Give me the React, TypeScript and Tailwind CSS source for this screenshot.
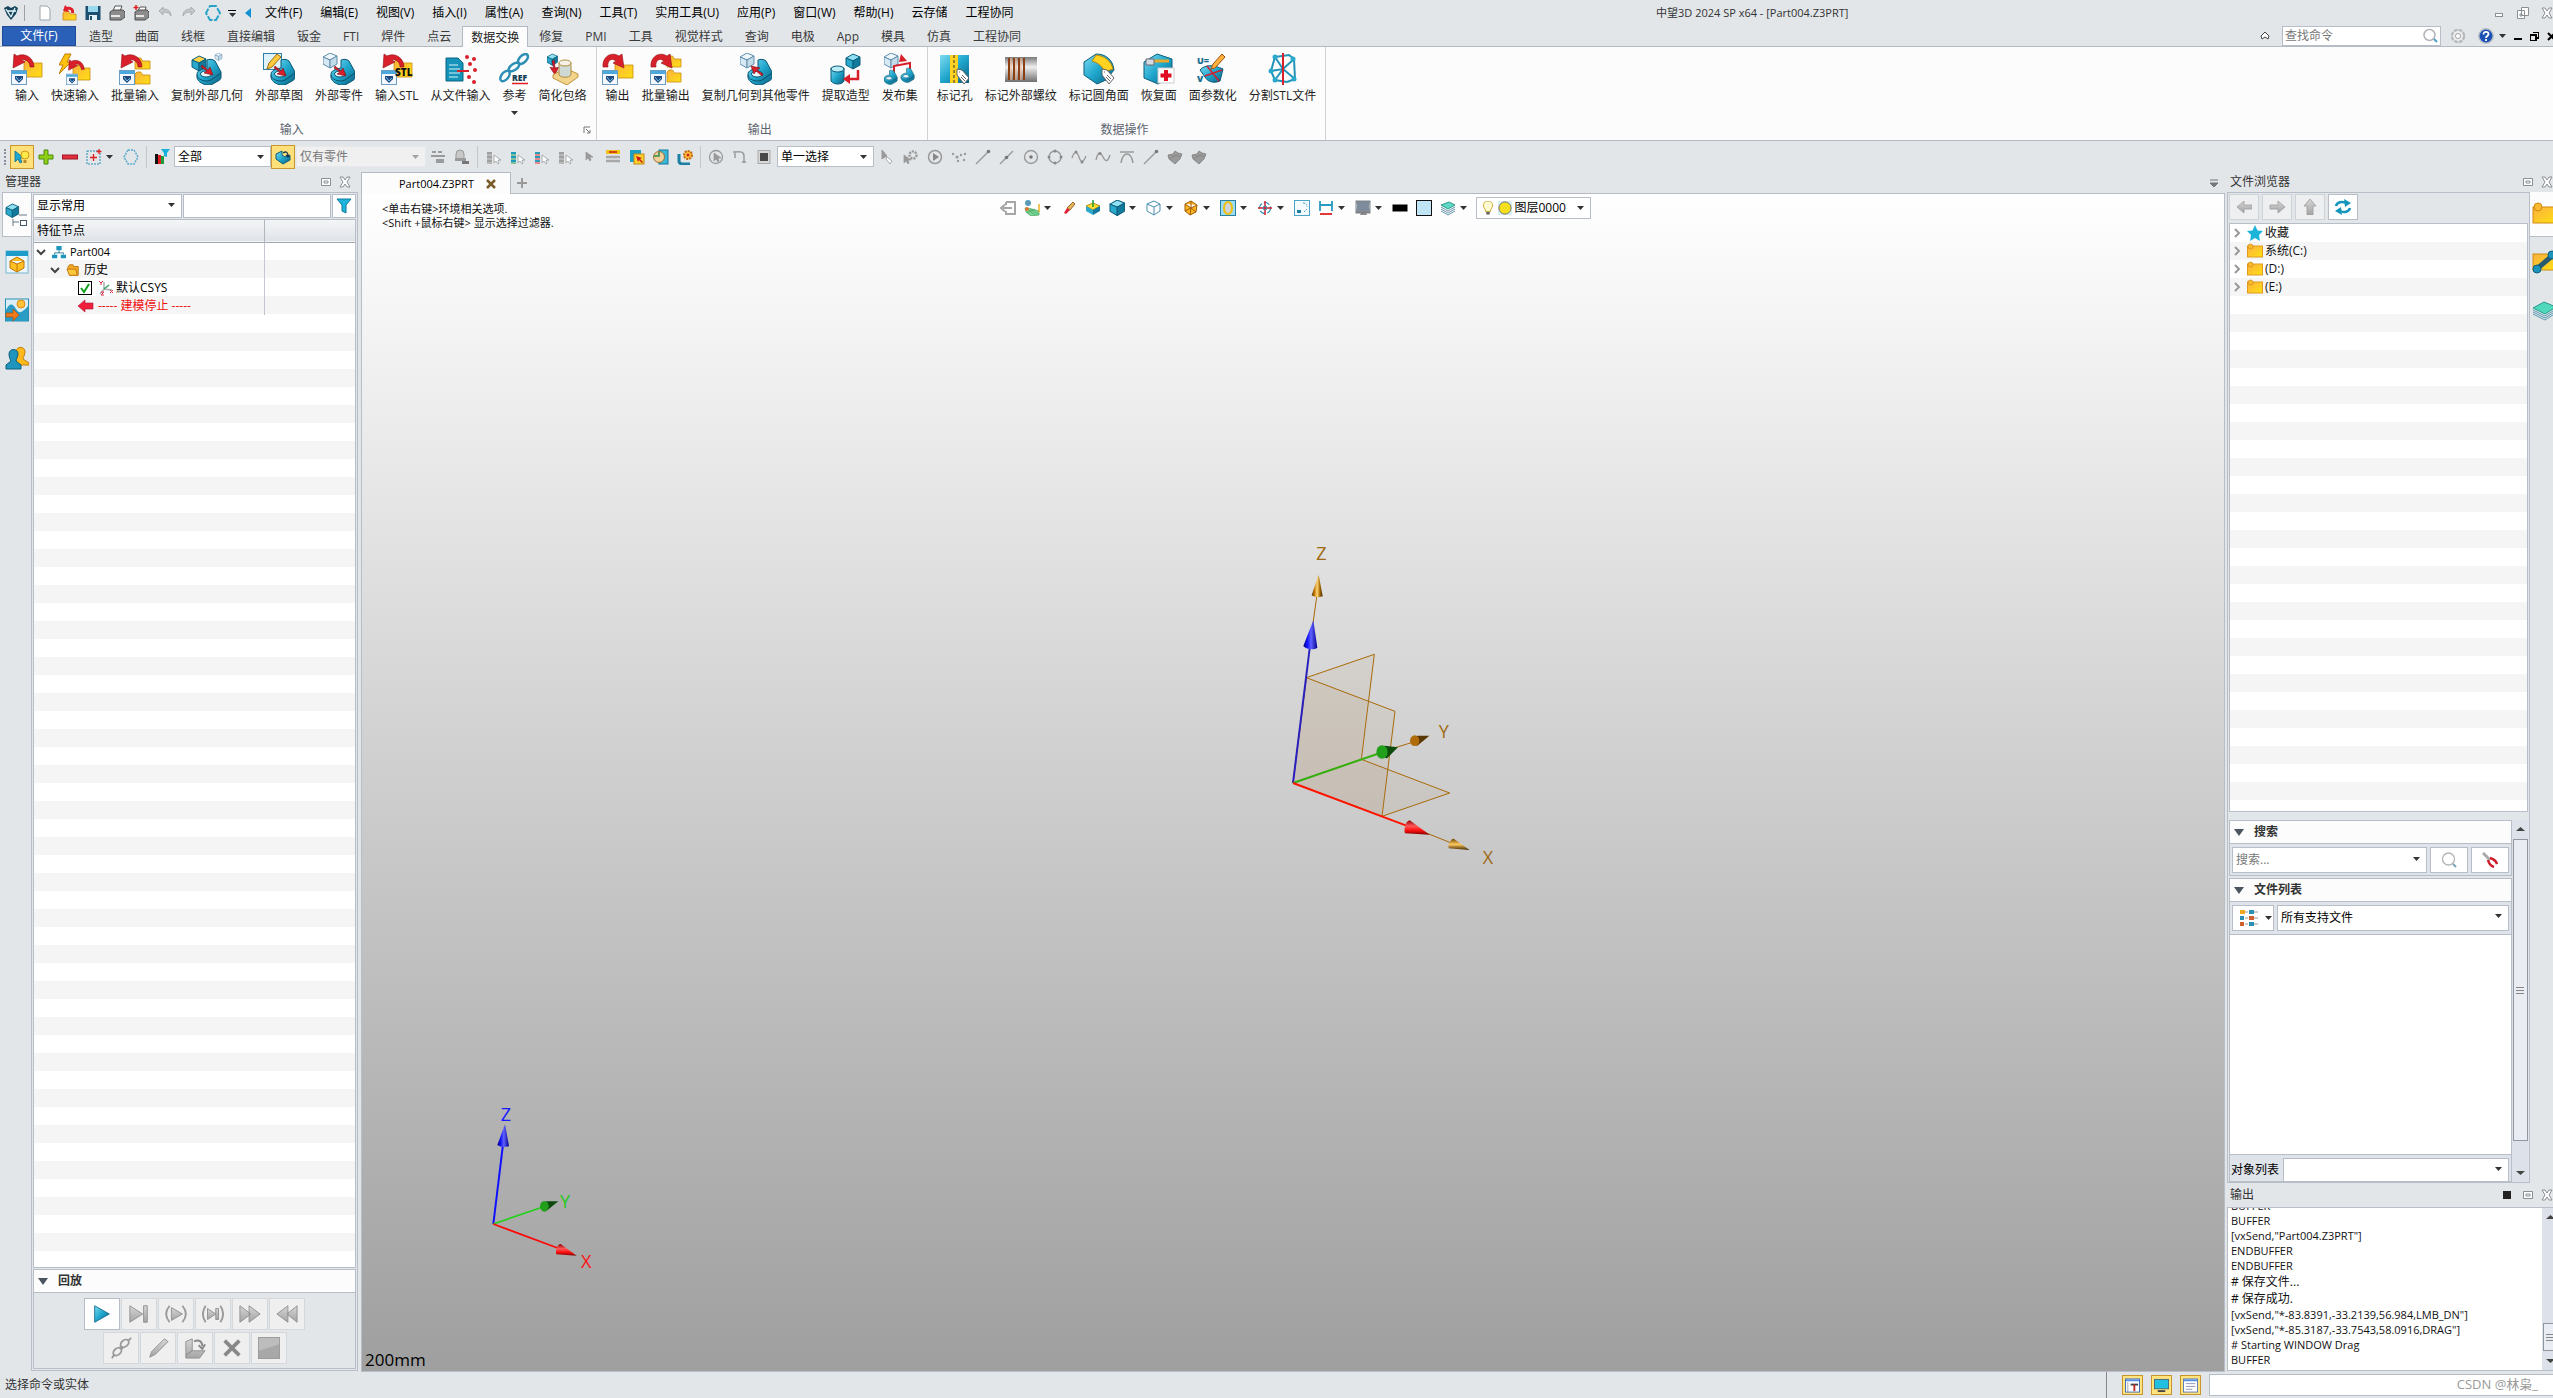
import React from "react";

type Kids = { children?: React.ReactNode };

/* ---------- shared drawing pieces ---------- */

function Svg({ s = 16, v, className = "", children }: Kids & { s?: number; v?: number; className?: string }) {
  return (
    <svg width={s} height={s} viewBox={`0 0 ${v ?? s} ${v ?? s}`} className={`shrink-0 ${className}`} aria-hidden="true" fill="none">
      {children}
    </svg>
  );
}

function Gradients() {
  return (
    <svg className="absolute h-0 w-0" aria-hidden="true">
      <defs>
        <linearGradient id="teal" x1="0" y1="0" x2="1" y2="1">
          <stop offset="0" stopColor="#7fdcf2" />
          <stop offset="0.5" stopColor="#1fa6cc" />
          <stop offset="1" stopColor="#0d5f80" />
        </linearGradient>
        <linearGradient id="gold" x1="0" y1="0" x2="1" y2="1">
          <stop offset="0" stopColor="#fbb040" />
          <stop offset="1" stopColor="#ffe012" />
        </linearGradient>
        <linearGradient id="steel" x1="0" y1="0" x2="0" y2="1">
          <stop offset="0" stopColor="#7a7a7a" />
          <stop offset="0.4" stopColor="#efefef" />
          <stop offset="1" stopColor="#6f6f6f" />
        </linearGradient>
        <linearGradient id="gray" x1="0" y1="0" x2="0" y2="1">
          <stop offset="0" stopColor="#d6d6d6" />
          <stop offset="1" stopColor="#a4a4a4" />
        </linearGradient>
        <linearGradient id="coneGold" x1="0" y1="0" x2="1" y2="0">
          <stop offset="0" stopColor="#4d2d00" />
          <stop offset="0.25" stopColor="#c07a00" />
          <stop offset="0.5" stopColor="#ffd67a" />
          <stop offset="0.75" stopColor="#a86a00" />
          <stop offset="1" stopColor="#3d2400" />
        </linearGradient>
        <linearGradient id="coneGoldV" x1="0" y1="0" x2="0" y2="1">
          <stop offset="0" stopColor="#6b4200" />
          <stop offset="0.5" stopColor="#ffc95e" />
          <stop offset="1" stopColor="#3d2400" />
        </linearGradient>
        <linearGradient id="coneBlue" x1="0" y1="0" x2="1" y2="0">
          <stop offset="0" stopColor="#000080" />
          <stop offset="0.3" stopColor="#1414ff" />
          <stop offset="0.55" stopColor="#6060ff" />
          <stop offset="1" stopColor="#000090" />
        </linearGradient>
        <linearGradient id="coneRed" x1="0" y1="0" x2="0" y2="1">
          <stop offset="0" stopColor="#900000" />
          <stop offset="0.4" stopColor="#ff5a5a" />
          <stop offset="0.7" stopColor="#ff1010" />
          <stop offset="1" stopColor="#800000" />
        </linearGradient>
      </defs>
    </svg>
  );
}

const Folder = ({ x = 0, y = 0, w = 18, h = 16 }) => (
  <path
    d={`M${x} ${y + 2}l2-2h${w * 0.25}l2 3h${w * 0.75 - 4}v${h - 3}H${x}Z`}
    fill="url(#gold)"
    stroke="#c98a10"
    strokeWidth="0.8"
  />
);
const DocWin = () => (
  <>
    <rect x="0.5" y="17.5" width="15" height="14" fill="#f2f8fd" stroke="#6b9cc4" />
    <rect x="1" y="18" width="14" height="3" fill="#4aa8dc" />
    <path d="M4 23h8v3l-4 4-4-4Z" fill="#24477e" />
    <path d="M5 24l3 4 3-3" stroke="#6bc8e8" />
  </>
);
const ArrowIn = () => <path d="M23 14C23 5 14-1 6 3L3 1 2 15l12-6-3-2c4-1 8 2 8 7Z" fill="#d81f2a" stroke="#8e1018" strokeWidth="0.6" />;
const ArrowOut = () => <path d="M1 14C0 4 9-2 17 3l3-2 2 14-11-5 3-2C9 4 5 8 6 14Z" fill="#d81f2a" stroke="#8e1018" strokeWidth="0.6" />;
const Cube = ({ x = 0, y = 0, k = 1, ghost = false, top = "" }) => (
  <g transform={`translate(${x} ${y}) scale(${k})`} stroke={ghost ? "#5f8dab" : "#0c5f7c"} strokeLinejoin="round">
    <path d="M0 4l7-4 7 3-7 4Z" fill={ghost ? "#eef6fb" : top || "#8fe0f3"} />
    <path d="M0 4l7 3v8l-7-4Z" fill={ghost ? "#d9e9f3" : "#2aa9cc"} />
    <path d="M14 3l-7 4v8l7-4Z" fill={ghost ? "#c4dbe9" : "#127a9c"} />
  </g>
);
const Bracket = ({ x = 8, y = 6, k = 1 }) => (
  <g transform={`translate(${x} ${y}) scale(${k})`}>
    <path d="M10 1c2-1 6-1 8 1l6 11v5c0 2-1 3-3 4l-7 4C8 27 0 23 0 18v-3c0-3 4-5 10-6Z" fill="url(#teal)" stroke="#0b5874" />
    <path d="M0 16c0 4 8 8 14 5l10-7" stroke="#083f55" strokeWidth="0.8" />
    <ellipse cx="9" cy="15" rx="5.500" ry="3" fill="#eaf8fc" stroke="#0b5874" />
  </g>
);
const RedDiag = ({ x = 0, y = 0, r = 0 }) => (
  <path transform={`translate(${x} ${y}) rotate(${r})`} d="M-6-5l6 5 2-3 3 8-9-2 3-2-6-4Z" fill="#d81f2a" stroke="#7e1018" strokeWidth="0.6" />
);
const Tag = ({ x = 0, y = 0 }) => (
  <path transform={`translate(${x} ${y})`} d="M0 0l5 1 7 8-5 6-7-9Zm2 3h1M5 6l4 4M4 8l4 4" fill="#fff" stroke="#555" strokeWidth="0.9" />
);

const big: Record<string, React.ReactNode> = {
  in: <><Folder x={13} y={7} w={18} h={17} /><ArrowIn /><DocWin /></>,
  quick: <><Folder x={14} y={12} w={17} h={15} /><path d="M6 1L0 12h4l-4 9L12 9H8l4-8Z" fill="#ffc20e" stroke="#c07c08" /><g transform="translate(8 6) scale(.75)"><ArrowIn /></g><g transform="translate(7 8) scale(.75)"><DocWin /></g></>,
  batchIn: <><Folder x={16} y={5} w={15} h={11} /><Folder x={16} y={19} w={15} h={12} /><ArrowIn /><DocWin /></>,
  copyGeo: <><Bracket x={6} y={6} /><Cube x={1} y={3} top="#ffd34a" /><Cube x={24} y={0} k={0.5} ghost /><RedDiag x={17} y={17} /></>,
  sketch: <><rect x="0.500" y="0.500" width="18" height="16" fill="#dff1f9" stroke="#2a7fa5" /><Bracket x={8} y={6} /><path d="M4 16l2-6L14 1l4 3-9 10Z" fill="#ffc93c" stroke="#9a6b13" /><RedDiag x={18} y={18} /></>,
  extPart: <><Bracket x={8} y={6} /><Cube x={0} y={0} ghost /><RedDiag x={18} y={18} /></>,
  stl: <><Folder x={13} y={7} w={18} h={17} /><ArrowIn /><DocWin /><text x="14" y="23" fontSize="10" fontWeight="900" fill="#111" fontFamily="Open Sans">STL</text></>,
  fromFile: <><path d="M1 5h12l5 5v18H1Z" fill="#1593b8" stroke="#0a6484" /><path d="M4 12h9M4 16h11M4 20h11M4 24h9" stroke="#d8f4fc" strokeWidth="1.200" /><path d="M12 18h12" stroke="#d81f2a" strokeWidth="2" /><g fill="#d81f2a"><circle cx="22" cy="4" r="2" /><circle cx="29" cy="6" r="2" /><circle cx="25" cy="11" r="2" /><circle cx="30" cy="17" r="2" /><circle cx="24" cy="24" r="2" /><circle cx="29" cy="29" r="2" /></g></>,
  ref: <><g stroke="#2d8fb5" strokeWidth="2.500"><ellipse cx="24" cy="6" rx="6" ry="3.500" transform="rotate(-45 24 6)" /><ellipse cx="15" cy="14" rx="6" ry="3" transform="rotate(-35 15 14)" /><ellipse cx="6" cy="23" rx="6" ry="3.500" transform="rotate(-50 6 23)" /></g><text x="13" y="28" fontSize="8.500" fontWeight="800" fill="#123a52" fontFamily="Open Sans">REF</text><path d="M13 30.500h16" stroke="#e02020" strokeWidth="1.500" /></>,
  simplify: <><Cube x={0} y={1} k={0.75} /><RedDiag x={8} y={15} r={45} /><path d="M6 22l12-7 13 6v3l-11 8-14-7Z" fill="#f3d48c" stroke="#c19338" /><path d="M12 10v12c2 3 10 3 12 0V10Z" fill="#cfd9d4" stroke="#b08c3e" /><ellipse cx="18" cy="10" rx="6" ry="3" fill="#f5f3e6" stroke="#b08c3e" /></>,
  out: <><Folder x={13} y={9} w={18} h={16} /><ArrowOut /><DocWin /></>,
  batchOut: <><Folder x={17} y={3} w={14} h={11} /><Folder x={17} y={17} w={14} h={12} /><ArrowOut /><DocWin /></>,
  copyTo: <><Bracket x={8} y={6} /><Cube x={0} y={0} ghost /><RedDiag x={16} y={18} r={180} /></>,
  extract: <><Cube x={16} y={1} /><path d="M1 15v13c3 4 11 4 13 0V15Z" fill="url(#teal)" stroke="#0b5874" /><ellipse cx="7.500" cy="16" rx="6.500" ry="3" fill="#b8ecf8" stroke="#0b5874" /><path d="M28 17v9H18" stroke="#d81f2a" strokeWidth="2.500" /><path d="M20 21l-7 5 7 5Z" fill="#d81f2a" /></>,
  publish: <><Cube x={0} y={0} ghost /><path d="M10 22V13l16-3v10" stroke="#d81f2a" strokeWidth="2" /><path d="M15 9l2-8 6 7Z" fill="#d81f2a" /><Bracket x={0} y={17} k={0.55} /><Bracket x={17} y={15} k={0.55} /></>,
  hole: <><rect x="1" y="2" width="29" height="28" fill="url(#teal)" /><rect x="11" y="2" width="8" height="28" fill="#ffd21f" /><path d="M15 2v28" stroke="#333" strokeDasharray="3 2" /><Tag x={18} y={16} /></>,
  thread: <><rect x="0" y="4" width="32" height="25" fill="url(#steel)" /><path d="M4 5v22M9 5v22M14 5v22M19 5v22" stroke="#8c3f14" strokeWidth="2" /><path d="M6 5v22M11 5v22M16 5v22" stroke="#f2b48c" /></>,
  fillet: <><path d="M1 9L13 1c10 0 17 6 18 16l-8 10-9 4L1 22Z" fill="url(#teal)" stroke="#0c5f7c" /><path d="M13 2c9 1 15 6 17 14l-9 3C20 14 16 10 9 8Z" fill="#ffd21f" stroke="#b88a10" /><Tag x={19} y={16} /></>,
  restore: <><path d="M1 9L14 1l15 5v18l-14 7L1 25Z" fill="url(#teal)" stroke="#0c5f7c" /><path d="M6 8h20" stroke="#e9a92c" strokeWidth="3" /><path d="M3 6h8v6H3Z" fill="#d5dde2" stroke="#667" /><rect x="15" y="15" width="16" height="15" fill="#fff" stroke="#ccc" /><path d="M23 17v11M17.500 22.500h11" stroke="#e01020" strokeWidth="4" /></>,
  param: <><text x="0" y="11" fontSize="9" fontWeight="800" fill="#176d8d" fontFamily="Open Sans">U=</text><text x="0" y="29" fontSize="9" fontWeight="800" fill="#176d8d" fontFamily="Open Sans">V</text><path d="M3 17c5-6 14-5 23-1l-3 12c-7 3-13 0-15-4Z" fill="url(#teal)" stroke="#0b5874" /><path d="M10 13l12 15M25 17L8 23" stroke="#cf2030" strokeWidth="1.500" /><path d="M14 16l2-5L25 1l3 3-10 11Z" fill="#ffb23c" stroke="#9a5013" /></>,
  splitStl: <><path d="M8 4l14-2 5 4 1 20-8 3-12-2-4-9Zm0 0l8 12 11-10M4 18l12-2 12 10M16 16l-8 11" stroke="#2294b8" strokeWidth="2" /><g fill="#2aa9cc"><circle cx="8" cy="4" r="2.500" /><circle cx="26" cy="6" r="2.500" /><circle cx="4" cy="18" r="2.500" /><circle cx="27" cy="26" r="2.500" /><circle cx="8" cy="27" r="2.500" /></g><path d="M16 0v32" stroke="#d81f2a" strokeWidth="2" /></>,
};

const G = "#9a9a9a";
const Pointer = ({ x = 0, y = 0, c = "#fff" }) => (
  <path transform={`translate(${x} ${y})`} d="M0 0v8l2-2 2 3 1-1-1-3h3Z" fill={c} stroke="#9a9a9a" strokeWidth="0.8" />
);
const listGlyph = (a: string, b: string) => (
  <><path d="M2 4h5M2 8h5M2 12h5" stroke={a} strokeWidth="2" /><path d="M2 6h5M2 10h5M2 14h5" stroke={b} /><Pointer x={9} y={6} /></>
);

const small: Record<string, React.ReactNode> = {
  newDoc: <path d="M3 1h7l3 3v11H3Z" fill="#fff" stroke="#9aa5ae" />,
  open: <><Folder x={2} y={6} w={13} h={9} /><path d="M13 8C14 3 9 1 6 2L4 0 2 6l6 1-1-2c2-1 4 1 3 3Z" fill="#e0202a" /></>,
  save: <><rect x="0.500" y="1" width="15" height="14" fill="#1d4f70" /><rect x="3" y="1" width="10" height="6" fill="#9bd8ee" /><rect x="4" y="10" width="8" height="5" fill="#e6f2f7" /><path d="M6 11v4" stroke="#1d4f70" strokeWidth="2" /></>,
  print: <><path d="M4 6l2-5h7l-2 5Z" fill="#fff" stroke="#555" /><path d="M1 7l3-2h10l2 2v5l-4 3H1Z" fill="#8c8c8c" stroke="#4e4e4e" /><path d="M2 11h9" stroke="#e8e8e8" strokeWidth="2" /></>,
  print2: <><path d="M5 6l2-4h6l-1 4Z" fill="#fff" stroke="#555" /><path d="M2 7l3-2h9l2 2v5l-4 3H2Z" fill="#8c8c8c" stroke="#4e4e4e" /><path d="M3 11h8" stroke="#e8e8e8" strokeWidth="2" /><path d="M3 0v5M.5 2.500h5" stroke="#e02020" strokeWidth="1.500" /></>,
  undo: <path d="M2 6l4-4v2c5 0 8 2 8 7-1-3-4-4-8-4v3Z" fill="#c4c8cb" stroke="#9fa5a9" strokeWidth="0.800" />,
  redo: <path d="M14 6l-4-4v2c-5 0-8 2-8 7 1-3 4-4 8-4v3Z" fill="#c4c8cb" stroke="#9fa5a9" strokeWidth="0.800" />,
  regen: <path d="M5 1h6l4 7-4 7H5L1 8Z" stroke="#2aa3cb" strokeWidth="2" strokeDasharray="7 1.500" />,
  pickLight: <><path d="M1 2v11l3-3 2 4 2-1-2-4h4Z" fill="#1ea7d2" stroke="#0d6e92" strokeWidth="0.800" /><circle cx="11" cy="6" r="4" fill="#ffe94a" stroke="#d09a10" /><path d="M9.500 11h3v3h-3Z" fill="#bb8a30" /></>,
  plus: <path d="M6 1h4v5h5v4h-5v5H6v-5H1V6h5Z" fill="#8fd014" stroke="#4d8a10" />,
  minus: <rect x="0.500" y="6" width="15" height="4" fill="#e03040" stroke="#a01525" />,
  marquee: <><path d="M1 2h13v13H1Z" stroke="#2a8fb5" strokeDasharray="2 1" /><path d="M7.500 5v7M4 8.500h7M13 0v5M10.500 2.500h5" stroke="#e02020" strokeWidth="1.300" /></>,
  hexDash: <path d="M5 1h6l4 7-4 7H5L1 8Z" stroke="#5aa9cc" strokeWidth="1.500" strokeDasharray="2 1" />,
  palette: <><path d="M1 5h3v10H1Z" fill="#111" /><path d="M4 6h3v9H4Z" fill="#e02020" /><path d="M7 7h3v8H7Z" fill="#1c9c3c" /><path d="M7 0h9l-3 4v4l-3-1V4Z" fill="#19b0dc" /></>,
  shapePick: <><path d="M1 5l6-3v4l3 2 3-2 2 1v4l-7 4-7-5Z" fill="url(#teal)" stroke="#0c5f7c" /><path d="M8 4c3-2 5-1 5 3m-2-1l2 2 2-2" stroke="#123a52" strokeWidth="1.300" /></>,
  dim1: <><path d="M2 3h4M8 3h4M1 7h14" stroke={G} strokeWidth="2" /><path d="M6 10h8v4H6Z" fill={G} /></>,
  dim2: <><path d="M2 10V5a4 4 0 018 0v5" fill="#c8c8c8" stroke={G} /><path d="M1 9h11v3H1Z" fill={G} /><path d="M8 12h7v3H8Z" fill="#777" /></>,
  listG: listGlyph("#a0a0a0", "#8a8a8a"),
  listT: listGlyph("#1a9cc0", "#2a9a4a"),
  listR: listGlyph("#2a9cc0", "#e03030"),
  cursorG: <Pointer x={5} y={3} c="#9a9a9a" />,
  stack: <><path d="M1 3h14" stroke="#f2c118" strokeWidth="4" /><path d="M4 3h8" stroke="#c81818" strokeWidth="1.500" /><path d="M1 8h14M1 12h14" stroke="#a8a8a8" strokeWidth="2.500" /></>,
  boxPick: <><rect x="1" y="1" width="11" height="12" fill="#1c9fc4" /><rect x="5" y="5" width="10" height="10" fill="#ffcf30" stroke="#c08a10" /><path d="M7 7l6 2-2 1 3 3-1 1-3-3-1 2Z" fill="#c81818" /></>,
  mouse: <><rect x="6" y="1" width="9" height="14" fill="#39b6d8" stroke="#137a9c" /><circle cx="6" cy="8" r="5.500" fill="#f1cf9a" stroke="#9b7335" /><path d="M6 3v4H1" stroke="#2a8f4a" strokeWidth="1.500" /></>,
  gearCyan: <><path d="M2 5v7c0 3 4 3 5 3h6" stroke="#1c7fa4" strokeWidth="3" /><circle cx="11" cy="6" r="4" fill="#ffc23a" stroke="#c06a10" strokeDasharray="2 1" strokeWidth="2" /><circle cx="11" cy="6" r="1.500" fill="#d02020" /></>,
  compass: <><circle cx="8" cy="8" r="6.500" stroke={G} strokeWidth="1.300" /><Pointer x={6} y={4} c="#9a9a9a" /></>,
  magnet: <path d="M3 4v5M3 3c6-1 9 0 9 4v7M1 3h4M10 13h4" stroke={G} strokeWidth="1.500" />,
  square: <><rect x="2" y="1.500" width="12" height="13" fill="#d8d8d8" stroke="#aaa" /><rect x="4" y="4" width="8" height="8" fill="#484848" /></>,
  wand: <><path d="M3 1v9l3-2 2-1Z" fill="#999" stroke="#999" /><path d="M8 8l5 4-2 3-4-5Z" fill="#fff" stroke="#aaa" /></>,
  gearPick: <><circle cx="10" cy="6" r="3.500" stroke={G} strokeWidth="2.500" strokeDasharray="2 1" /><Pointer x={1} y={6} c="#9a9a9a" /></>,
  playCircle: <><circle cx="8" cy="8" r="6.500" stroke={G} strokeWidth="1.500" /><path d="M6 4l6 4-6 4Z" fill="#888" /></>,
  dots: <g fill={G}><circle cx="2" cy="5" r="1.200" /><circle cx="6" cy="8" r="1.600" /><circle cx="10" cy="6" r="1.200" /><circle cx="14" cy="5" r="1.200" /><circle cx="7" cy="12" r="1.200" /><circle cx="13" cy="11" r="1.200" /></g>,
  lineEnd: <><path d="M1 15L14 2" stroke={G} strokeWidth="1.400" /><circle cx="13.500" cy="2.500" r="1.800" fill="#777" /></>,
  lineMid: <><path d="M1 15L14 2" stroke={G} strokeWidth="1.400" /><circle cx="7.500" cy="8.500" r="1.800" fill="#777" /></>,
  circleDot: <><circle cx="8" cy="8" r="6.500" stroke={G} strokeWidth="1.400" /><circle cx="8" cy="8" r="1.800" fill="#777" /></>,
  circleQuad: <><circle cx="8" cy="8" r="6" stroke={G} strokeWidth="1.400" /><g fill="#888"><circle cx="8" cy="2" r="1.500" /><circle cx="8" cy="14" r="1.500" /><circle cx="2" cy="8" r="1.500" /><circle cx="14" cy="8" r="1.500" /></g></>,
  wave: <><path d="M1 9C3 2 6 2 8 8s4 6 7-1" stroke={G} strokeWidth="1.400" /><circle cx="5" cy="3" r="1.500" fill="#888" /><circle cx="11" cy="13" r="1.500" fill="#888" /></>,
  wave2: <><path d="M1 11C3 3 5 2 8 8s5 4 7-2" stroke={G} strokeWidth="1.400" /><circle cx="5" cy="4.500" r="1.500" fill="#888" /></>,
  tangent: <path d="M1 3h14M2 14C4 2 12 2 14 14" stroke={G} strokeWidth="1.500" />,
  face: <path d="M1 6l5-1 2-3 3 2 4 1-2 5-5 5-6-5Zm3 3l5-3 4 2" fill="#9a9a9a" stroke="#7d7d7d" strokeWidth="0.800" />,
  exit: <><path d="M6 2h9v12H6v-3M6 5V2" stroke="#a6a6a6" strokeWidth="2" /><path d="M12 8H3M5 4.500L1 8l4 3.500" stroke="#a6a6a6" strokeWidth="2" /></>,
  plane: <><circle cx="4" cy="3" r="3" fill="#5a9ab8" /><path d="M1 8l7 1 7 2v4l-8 1-5-4Z" fill="#7fd694" stroke="#3aa060" strokeWidth="0.700" /><path d="M3 9l8 6M6 9l8 5M3 13l8-4" stroke="#2f9a58" strokeWidth="0.600" /><path d="M15 4v8" stroke="#f0b020" strokeWidth="1.500" /><circle cx="3" cy="9" r="2" fill="#e07830" /></>,
  brush: <><path d="M12 2l2 2-5 6-3-2Z" fill="#e2b35a" stroke="#9a6a2a" /><path d="M6 8l3 2-4 4-2-1Z" fill="#e02030" /></>,
  datum: <><path d="M1 6l7-3 7 3-7 4Z" fill="#ffe030" stroke="#b89010" /><path d="M1 6l7 4v5l-7-4Z" fill="#2aa9cc" /><path d="M15 6l-7 4v5l7-4Z" fill="#1379a0" /><path d="M8 7V0" stroke="#1c9c3c" strokeWidth="1.500" /></>,
  shaded: <Cube x={1} y={0} k={1.03} />,
  wire: <g stroke="#4a8fae"><path d="M1 4l7-3 6 3v7l-6 4-7-4ZM1 4l7 3 6-3M8 7v8" /></g>,
  mesh: <path d="M2 4l6-3 6 4-1 7-6 3-5-4Zm0 0l6 4 6-3M8 8l-1 7M8 8l-6 3M8 8l5 4M8 8V1" fill="#ffb820" stroke="#a05a08" />,
  section: <><rect x="0.500" y="0.500" width="15" height="15" fill="#9adcf0" stroke="#2a7fa5" /><ellipse cx="8" cy="8" rx="4" ry="6" fill="#d0d4d8" stroke="#f0c010" strokeWidth="2" /></>,
  target: <><circle cx="8" cy="8" r="5.500" stroke="#2a8fb5" strokeWidth="1.200" strokeDasharray="6 2" /><path d="M8 1v14M1 8h14" stroke="#d82030" strokeWidth="1.500" /><circle cx="8" cy="8" r="2" stroke="#2a8fb5" /></>,
  sheet: <><rect x="0.500" y="0.500" width="15" height="15" fill="#f4fbfe" stroke="#4aa3c5" /><path d="M3 10h4v3H3Z" fill="#1d7fa5" /><path d="M9 3c3 0 4 1 4 4M10 12l3-3" stroke="#4aa3c5" strokeDasharray="2 1" /></>,
  measure: <><path d="M2 1v10M14 1v10M2 5h12" stroke="#2a9cc4" strokeWidth="1.800" /><path d="M2 14h12" stroke="#e02020" strokeWidth="1.800" /></>,
  screen: <><rect x="1" y="1" width="14" height="12" fill="url(#steel)" stroke="#7c8690" /><rect x="2" y="2" width="12" height="9" fill="#7d8b9c" /><path d="M5 15h7l-1-2H6Z" fill="#888" /></>,
  black: <rect x="0.500" y="4.500" width="15" height="7" fill="#000" />,
  sky: <rect x="0.500" y="0.500" width="15" height="15" fill="#c0e6f6" stroke="#111" />,
  layers: <><path d="M1 5l8-3 6 3-7 4Z" fill="#5fd8c4" stroke="#2a9a8a" /><path d="M1 7l7 4 7-4M1 9l7 4 7-4M1 11l7 4 7-4" stroke="#6a96ac" /></>,
  funnel: <path d="M1 1h14l-5 6v8l-4-2V7Z" fill="#1eb4dc" stroke="#117a9c" />,
  tree: <><path d="M5 1h6v5H5ZM0 11h6v4H0ZM10 11h6v4h-6Z" fill="#1c94bc" /><path d="M8 6v3M3 11V9h10v2" stroke="#1c6f90" /></>,
  folderOpen: <><path d="M2 5l2-3h4l1 2h5v10H4Z" fill="#f5a623" stroke="#b87410" /><path d="M1 7h10l2 7H4Z" fill="#ffc93c" stroke="#b87410" /></>,
  csys: <><path d="M6 2v7l8 1M6 9l-4 5" stroke="#a8b0b0" strokeWidth="1.500" /><path d="M1 1l2 2 2-2M3 3v2M12 10l3 3m0-3l-3 3M3 12h3l-3 3h3" stroke="#d83040" /><path d="M6 9l5-4" stroke="#3aa060" strokeWidth="1.500" /></>,
  redLeft: <path d="M0 8l7-6v3h8v6H7v3Z" fill="#f0203c" stroke="#b01030" strokeWidth="0.600" />,
  star: <path d="M8 0l2.500 5.500 5.500.5-4 4 1 6-5-3-5 3 1-6-4-4 5.500-.5Z" fill="#1cb4d8" />,
  folder: <><rect x="0.500" y="3" width="15" height="11" fill="url(#gold)" stroke="#e09a20" /><circle cx="3.500" cy="3.500" r="2.500" fill="#fbb930" stroke="#d08a10" strokeWidth="0.700" /></>,
};

const Arrow = ({ className = "" }) => (
  <svg width="7" height="4" viewBox="0 0 7 4" className={`shrink-0 ${className}`} aria-hidden="true"><path d="M0 0h7L3.500 4Z" fill="#333" /></svg>
);

function Tool({ i, arrow = false, on = false, label }: { i: string; arrow?: boolean; on?: boolean; label: string }) {
  const box = arrow ? "w-[37px] gap-1 pl-1" : on ? "w-6 justify-center border border-[#c8982e] bg-[#ffe07a]" : "w-6 justify-center";
  return (
    <button aria-label={label} className={`flex h-6 shrink-0 items-center ${box}`}>
      <Svg>{small[i]}</Svg>
      {arrow && <Arrow />}
    </button>
  );
}

function Drop({ value, label, className = "", muted = false }: { value: string; label: string; className?: string; muted?: boolean }) {
  return (
    <div className={`relative flex items-center border ${muted ? "border-[#e6e8eb] bg-[#f0f0f0] text-[#777]" : "border-[#b8bec8] bg-white text-black"} ${className}`}>
      <select aria-label={label} className="h-full w-full appearance-none bg-transparent pl-[3px] outline-none">
        <option>{value}</option>
      </select>
      <Arrow className={`pointer-events-none absolute top-2 right-[6px] ${muted ? "opacity-40" : ""}`} />
    </div>
  );
}

const Sep = () => <div className="mx-[3px] h-[22px] w-px bg-[#c2c7cd]" />;

/* ---------- top bars ---------- */

const quick = ["newDoc", "open", "save", "print", "print2", "undo", "redo", "regen"];
const menus = ["文件(F)", "编辑(E)", "视图(V)", "插入(I)", "属性(A)", "查询(N)", "工具(T)", "实用工具(U)", "应用(P)", "窗口(W)", "帮助(H)", "云存储", "工程协同"];
const tabs = ["造型", "曲面", "线框", "直接编辑", "钣金", "FTI", "焊件", "点云", "数据交换", "修复", "PMI", "工具", "视觉样式", "查询", "电极", "App", "模具", "仿真", "工程协同"];

const Close = () => <Svg s={12}><path d="M1 1h3l2 3 2-3h3L8 6l3 5H8L6 8l-2 3H1l3-5Z" fill="#fff" stroke="#8a8f94" /></Svg>;
const Pin = () => <Svg s={10}><path d="M.5 1.500h9v7h-9ZM3 4h4v2H3Z" stroke="#8a8f94" fill="#fff" /></Svg>;

function TitleBar() {
  return (
    <div className="relative flex h-[26px] items-center pl-[3px]">
      <Svg><path d="M1 3l4-2 3 2 4-2 3 2-2 6-5 6-4-5Z" fill="#17455c" /><path d="M3 4l5 8M12 3l-4 9M4 6h9" stroke="#e8f8ff" strokeWidth="1.300" /></Svg>
      <div className="mr-2 ml-[5px] h-4 w-px bg-[#9aa0a6]" />
      {quick.map((q) => <Tool key={q} i={q} label={q} />)}
      <button aria-label="自定义快速访问" className="flex w-[14px] flex-col items-center gap-[2px]"><span className="h-px w-2 bg-black" /><Arrow /></button>
      <button aria-label="收起菜单" className="flex w-[18px] justify-center"><Svg s={10}><path d="M8 0v10L2 5Z" fill="#1290d0" /></Svg></button>
      <nav className="flex gap-[2px]">
        {menus.map((m) => <button key={m} className="px-2 leading-4 whitespace-nowrap text-black">{m}</button>)}
      </nav>
      <div className="absolute left-[1656px] text-[11px] whitespace-nowrap text-[#333]">中望3D 2024 SP x64 - [Part004.Z3PRT]</div>
      <div className="ml-auto flex items-center gap-3">
        <button aria-label="最小化"><Svg s={12}><rect x="2.500" y="6.500" width="7" height="3" fill="#fff" stroke="#8a8f94" /></Svg></button>
        <button aria-label="还原"><Svg s={12}><path d="M4.500.5h7v8h-7ZM.5 3.500h7v8h-7ZM3 7h2v2H3Z" fill="#fff" stroke="#8a8f94" /></Svg></button>
        <button aria-label="关闭"><Close /></button>
      </div>
    </div>
  );
}

function TabBar() {
  return (
    <div className="flex h-[21px] items-stretch border-b border-[#b4bac4] text-[#3a3a3a]">
      <button className="mr-[2px] ml-[2px] w-[74px] border border-[#1f4c96] bg-[#2a60b8] text-white">文件(F)</button>
      {tabs.map((t) => (
        <button
          key={t}
          className={t === "数据交换" ? "-mb-px border border-b-0 border-[#b4bac4] bg-[#fcfcfc] px-2 pt-[1px] text-[#222]" : "px-[11px] pt-[2px]"}
        >
          {t}
        </button>
      ))}
      <div className="ml-auto flex items-center">
        <button aria-label="收起功能区" className="mr-3"><Svg s={10}><path d="M5 1l4 4-1 3-3-2-3 2-1-3Z" fill="#fff" stroke="#444" /></Svg></button>
        <label className="flex h-5 w-[159px] items-center border border-[#b8bec8] bg-white px-[2px]">
          <input aria-label="查找命令" placeholder="查找命令" className="w-0 flex-1 outline-none placeholder:text-[#777]" />
          <Svg><circle cx="7.500" cy="7" r="5.500" stroke="#b0b4b8" strokeWidth="1.500" /><path d="M12 11l3 3" stroke="#4a9cc4" strokeWidth="2" /></Svg>
        </label>
        <button aria-label="设置" className="ml-[9px]"><Svg><circle cx="8" cy="8" r="5.500" fill="#e9e9e9" stroke="#b4b8bc" strokeWidth="3.500" strokeDasharray="3.300 1" /><circle cx="8" cy="8" r="5" fill="#ececec" /><circle cx="8" cy="8" r="2.500" fill="#fff" stroke="#a0a4a8" /></Svg></button>
        <button aria-label="帮助" className="ml-3 flex items-center gap-[5px]">
          <Svg><circle cx="8" cy="8" r="7.200" fill="#1c50b4" stroke="#b8bec8" strokeWidth="1.500" /><path d="M5.500 6.500c0-4 5-3 5-.5 0 2-2.500 2-2.500 4M8 11v2" stroke="#fff" strokeWidth="1.800" /></Svg>
          <Arrow />
        </button>
        <button aria-label="最小化文档" className="ml-2"><Svg s={8}><path d="M0 7h8" stroke="#000" strokeWidth="2" /></Svg></button>
        <button aria-label="还原文档" className="ml-2"><Svg s={9}><path d="M3 0h6v6H7M0 3h6v6H0Z" stroke="#000" strokeWidth="2" /></Svg></button>
        <button aria-label="关闭文档" className="ml-2 w-[6px] overflow-hidden"><Svg s={9}><path d="M1 1l7 7M8 1L1 8" stroke="#000" strokeWidth="2" /></Svg></button>
      </div>
    </div>
  );
}

const groups: { name: string; items: [string, string][]; launcher?: boolean; pad: string; label: string }[] = [
  {
    name: "输入", launcher: true, pad: "pl-[9px] pr-[3px]", label: "pr-3",
    items: [["in", "输入"], ["quick", "快速输入"], ["batchIn", "批量输入"], ["copyGeo", "复制外部几何"], ["sketch", "外部草图"], ["extPart", "外部零件"], ["stl", "输入STL"], ["fromFile", "从文件输入"], ["ref", "参考"], ["simplify", "简化包络"]],
  },
  { name: "输出", pad: "px-[3px]", label: "pr-1", items: [["out", "输出"], ["batchOut", "批量输出"], ["copyTo", "复制几何到其他零件"], ["extract", "提取造型"], ["publish", "发布集"]] },
  { name: "数据操作", pad: "px-[3px]", label: "pr-1", items: [["hole", "标记孔"], ["thread", "标记外部螺纹"], ["fillet", "标记圆角面"], ["restore", "恢复面"], ["param", "面参数化"], ["splitStl", "分割STL文件"]] },
];

function Ribbon() {
  return (
    <div className="flex h-[94px] border-b border-[#b4bac4] bg-[#fcfcfc]">
      {groups.map((g) => (
        <section key={g.name} className="flex flex-col border-r border-[#cfd3d8]">
          <div className={`flex flex-1 items-start pt-[6px] ${g.pad}`}>
            {g.items.map(([icon, label]) => (
              <button key={label} className="flex flex-col items-center px-[6px] text-[#1e1e1e]">
                <Svg s={32} className="-mx-1">{big[icon]}</Svg>
                <span className="mt-[3px] leading-4 whitespace-nowrap">{label}</span>
                {icon === "ref" && <Arrow className="mt-[7px]" />}
              </button>
            ))}
          </div>
          <div className={`relative h-[18px] text-center leading-4 text-[#5c6470] ${g.label}`}>
            {g.name}
            {g.launcher && (
              <button aria-label="更多" className="absolute top-1 right-[5px]"><Svg s={8}><path d="M1 7V1h6M3 3l4 4M7 4v3H4" stroke="#777" /></Svg></button>
            )}
          </div>
        </section>
      ))}
    </div>
  );
}

function SelectionBar() {
  const run = (a: string[]) => a.map((i) => <Tool key={i} i={i} label={i} />);
  return (
    <div className="flex h-[31px] items-center">
      <div className="mx-1 h-4 w-[2px] border-l-2 border-dotted border-[#8a90a0]" />
      <Tool i="pickLight" on label="智能拾取" />
      {run(["plus", "minus"])}
      <Tool i="marquee" arrow label="框选" />
      <Tool i="hexDash" label="多边形选择" />
      <Sep />
      <Tool i="palette" label="过滤颜色" />
      <Drop value="全部" label="过滤类型" className="h-[21px] w-[97px]" />
      <Tool i="shapePick" on label="拾取造型" />
      <Drop value="仅有零件" label="拾取范围" muted className="ml-[1px] h-[21px] w-[130px]" />
      {run(["dim1", "dim2"])}
      <Sep />
      {run(["listG", "listT", "listR"])}
      <Tool i="listG" label="列表" />
      {run(["cursorG", "stack", "boxPick", "mouse", "gearCyan"])}
      <Sep />
      {run(["compass", "magnet", "square"])}
      <Drop value="单一选择" label="选择方式" className="mr-[1px] ml-[1px] h-[21px] w-[97px]" />
      {run(["wand", "gearPick", "playCircle", "dots", "lineEnd", "lineMid", "circleDot", "circleQuad", "wave", "wave2", "tangent"])}
      <Tool i="lineEnd" label="端点" />
      <Tool i="face" label="面" />
      <Tool i="face" label="曲面点" />
    </div>
  );
}

/* ---------- left panel ---------- */

const stripes = "bg-[repeating-linear-gradient(#fff_0px,#fff_18px,#f5f5f5_18px,#f5f5f5_36px)]";

const rail: React.ReactNode[] = [
  <><Cube x={1} y={1} k={0.9} /><path d="M14 12h8M8 16v7M8 19h6" stroke="#6b7a88" /><rect x="15.500" y="17.500" width="6" height="5" stroke="#44586a" fill="#fff" /></>,
  <><rect x="1" y="1" width="22" height="22" fill="#eaf6fc" stroke="#7ab6d2" /><rect x="1" y="1" width="22" height="5" fill="#1c9cc8" /><path d="M5 11l7-4 7 4v7l-7 4-7-4Zm0 0l7 3 7-3M12 14v8" fill="#ffc020" stroke="#c07408" /></>,
  <><rect x="0.500" y="1" width="23" height="22" fill="#d9eef6" stroke="#2a8fb5" /><path d="M1 12c4-8 7-6 10-1s6 4 12-3v15H1Z" fill="#2a9cc4" /><circle cx="16" cy="6" r="4" fill="#ffc23a" stroke="#e08a10" /><path d="M1 15h7v-4l6 6-6 6v-4H1Z" fill="#ee7a1c" stroke="#a84c08" strokeWidth="0.700" /></>,
  <><path d="M11 5c1-5 9-5 9 1 0 3-2 5-2 7l6 4v2H11Z" fill="#ffb91c" stroke="#c07c08" /><path d="M4 8c0-6 9-6 9 0 0 3-2 5-2 7l5 4v4H1v-4l5-4c-1-2-2-4-2-7Z" fill="#1f94bc" stroke="#0c5f7c" /></>,
];

const Chevron = () => <Svg s={10} className="mx-[2px]"><path d="M1 3l4 4 4-4" stroke="#444" strokeWidth="2" /></Svg>;

function SectionHead({ children }: Kids) {
  return (
    <button className="flex h-[22px] w-full items-center gap-[10px] bg-[#fcfcfc] pl-1 text-left font-bold text-[#333]">
      <Svg s={10}><path d="M0 2h10L5 9Z" fill="#4a5560" /></Svg>
      {children}
    </button>
  );
}

const GS = { fill: "url(#gray)", stroke: "#8f8f8f" };
const play: React.ReactNode[][] = [
  [
    <path d="M4 3v18l16-9Z" fill="url(#teal)" stroke="#176f90" />,
    <path d="M2 3v18l14-9ZM17 3h4v18h-4Z" {...GS} />,
    <><path d="M7 5v14l12-7Z" {...GS} /><path d="M5 3c-5 6-5 12 0 18M19 3c5 6 5 12 0 18" stroke="#999" strokeWidth="2" /></>,
    <><path d="M6 6v12l9-6ZM15 6h3v12h-3Z" {...GS} /><path d="M4 3c-4 6-4 12 0 18M20 3c4 6 4 12 0 18" stroke="#999" strokeWidth="2" /></>,
    <path d="M1 3v18l12-9ZM11 3v18l12-9Z" {...GS} />,
    <path d="M23 3v18L12 12ZM13 3v18L1 12Z" {...GS} />,
  ],
  [
    <g stroke="#999" strokeWidth="2"><ellipse cx="16" cy="7" rx="5" ry="3.500" transform="rotate(-40 16 7)" /><ellipse cx="8" cy="16" rx="5" ry="3.500" transform="rotate(-40 8 16)" /><path d="M2 23l3-4M10 11l4 2M20 4l3-3" /></g>,
    <path d="M3 22l2-6L19 2l4 3L9 19Z" {...GS} />,
    <><path d="M2 5l7-3v13l-7 5ZM2 20l7-5h14l-6 8H2Z" {...GS} /><path d="M11 5c5-3 9 0 9 5M16 9l4 4 3-5" stroke="#888" strokeWidth="2" /></>,
    <path d="M4 4l16 16M20 4L4 20" stroke="#888" strokeWidth="4" />,
    <><path d="M0 0h24v24H0Z" fill="#a8a8a8" stroke="#8f8f8f" /><path d="M1 1h22v7L1 15Z" fill="#bdbdbd" /></>,
  ],
];

function PanelHead({ children, extra }: Kids & { extra?: React.ReactNode }) {
  return (
    <div className="flex h-5 shrink-0 items-center pl-[3px] text-[#333]">
      {children}
      <div className="ml-auto flex items-center gap-2">
        {extra}
        <button aria-label="浮动"><Pin /></button>
        <button aria-label="关闭面板"><Close /></button>
      </div>
    </div>
  );
}

function Manager() {
  return (
    <aside className="flex w-[358px] shrink-0 flex-col pl-[2px]">
      <div className="pr-[7px]"><PanelHead>管理器</PanelHead></div>
      <div className="flex min-h-0 flex-1">
        <div className="flex w-[29px] shrink-0 flex-col gap-[1px]">
          {rail.map((r, n) => (
            <button key={n} aria-label={`管理器标签 ${n + 1}`} className={`flex items-center justify-center ${n === 0 ? "h-[45px] border border-r-0 border-[#b8bec8] bg-[#fcfcfc]" : "h-[47px]"}`}>
              <Svg s={24}>{r}</Svg>
            </button>
          ))}
        </div>
        <div className="mb-[1px] flex min-w-0 flex-1 flex-col border border-[#b8bec8] p-[1px]">
          <div className="grid h-6 shrink-0 grid-cols-[1fr_1fr_24px] gap-[1px]">
            <Drop value="显示常用" label="显示" />
            <input aria-label="过滤文本" className="min-w-0 border border-[#b8bec8] bg-white px-1 outline-none" />
            <button aria-label="过滤" className="flex items-center justify-center border border-[#b8bec8] bg-white"><Svg>{small.funnel}</Svg></button>
          </div>
          <div className="mt-[1px] min-h-0 flex-1 border border-[#b8bec8] bg-white">
            <div className="flex h-full flex-col">
              <table className="w-full table-fixed border-collapse text-black">
                <colgroup><col className="w-[230px]" /><col /></colgroup>
                <thead>
                  <tr className="h-[22px] border-b border-[#a0a6ae] bg-linear-to-b from-[#f4f5f7] to-[#dfe3e8]">
                    <th className="border-r border-[#b0b6be] p-0 pl-[3px] text-left font-normal">特征节点</th>
                    <th className="p-0" />
                  </tr>
                </thead>
                <tbody className={stripes}>
                  <tr className="h-[18px]">
                    <td className="border-r border-[#c4c8d0] p-0"><div className="flex h-[18px] items-center text-[11px]"><Chevron /><Svg s={14} v={16} className="mx-1">{small.tree}</Svg>Part004</div></td><td />
                  </tr>
                  <tr className="h-[18px]">
                    <td className="border-r border-[#c4c8d0] p-0"><div className="flex h-[18px] items-center pl-[14px]"><Chevron /><Svg s={14} v={16} className="mx-1">{small.folderOpen}</Svg>历史</div></td><td />
                  </tr>
                  <tr className="h-[18px]">
                    <td className="border-r border-[#c4c8d0] p-0">
                      <label className="flex h-[18px] items-center pl-11">
                        <span className="relative flex">
                          <input type="checkbox" defaultChecked className="h-[14px] w-[14px] appearance-none border border-black bg-white" />
                          <Svg s={14} className="pointer-events-none absolute"><path d="M3 7l3 4 5-8" stroke="#12a020" strokeWidth="2" /></Svg>
                        </span>
                        <Svg className="mr-[2px] ml-[6px]">{small.csys}</Svg>默认CSYS
                      </label>
                    </td><td />
                  </tr>
                  <tr className="h-[18px]">
                    <td className="border-r border-[#c4c8d0] p-0"><div className="flex h-[18px] items-center gap-1 pl-11 text-[#f01010]"><Svg>{small.redLeft}</Svg>----- 建模停止 -----</div></td><td />
                  </tr>
                </tbody>
              </table>
              <div className={`flex-1 ${stripes}`} />
            </div>
          </div>
          <div className="mt-[1px] shrink-0 border border-[#b8bec8]">
            <div className="border-b border-[#b8bec8]"><SectionHead>回放</SectionHead></div>
            <div className="flex flex-col items-center gap-[2px] pt-[5px] pb-1">
              {play.map((row, r) => (
                <div key={r} className="flex gap-[1px]">
                  {row.map((p, c) => (
                    <button key={c} aria-label={`回放 ${r + 1}-${c + 1}`} className={`flex h-8 w-9 items-center justify-center border ${r + c === 0 ? "border-[#b8bec8] bg-white" : "border-[#d4d7db] bg-[#efefef]"}`}>
                      <Svg s={22} v={24}>{p}</Svg>
                    </button>
                  ))}
                </div>
              ))}
            </div>
          </div>
        </div>
      </div>
    </aside>
  );
}

/* ---------- model view ---------- */

const viewTools: [string, boolean][] = [
  ["exit", false], ["plane", true], ["brush", false], ["datum", false], ["shaded", true], ["wire", true], ["mesh", true], ["section", true],
  ["target", true], ["sheet", false], ["measure", true], ["screen", true], ["black", false], ["sky", false], ["layers", true],
];

function Datum() {
  return (
    <svg width="400" height="540" viewBox="-600 -810 1200 1620" className="absolute inset-0 m-auto" fill="none" fontFamily="Open Sans" fontSize="54">
      <g fill="#b48c5a" fillOpacity="0.1" stroke="#a86a08" strokeWidth="3">
        <path d="M0 0L40-316 244-386 205-71Z" />
        <path d="M0 0L40-316 306-215 267 100Z" />
        <path d="M0 0L205-71 470 30 267 100Z" />
      </g>
      <path d="M60-480L77-600M300-104L400-135M400 150L500 190" stroke="#a86a08" strokeWidth="3" />
      <path d="M0 0L52-420" stroke="#2a20c0" strokeWidth="6" />
      <path d="M0 0L270-93" stroke="#36b010" strokeWidth="6" />
      <path d="M0 0L340 128" stroke="#ff1400" strokeWidth="6" />
      <path d="M61-488l12 82c-10 8-32 6-42-5Z" fill="url(#coneBlue)" />
      <path d="M77-625l12 65c-8 4-26 3-33-3Z" fill="url(#coneGold)" />
      <path d="M315-107L283-75c-14 6-14-32-9-37Z" fill="#0c4a0c" />
      <ellipse cx="267" cy="-93" rx="17" ry="20" fill="#22a01c" />
      <path d="M409-142l-36 30c-8 0-8-26 0-30Z" fill="#5a3600" />
      <ellipse cx="365" cy="-127" rx="14" ry="16" fill="#b06c08" />
      <path d="M410 155L350 112c-14 2-18 32-14 39Z" fill="url(#coneRed)" />
      <path d="M530 201L482 167c-10 0-18 22-15 29Z" fill="url(#coneGoldV)" />
      <g fill="#a06a14"><text x="70" y="-670">Z</text><text x="437" y="-134">Y</text><text x="569" y="244">X</text></g>
    </svg>
  );
}

function Compass() {
  return (
    <svg width="150" height="190" viewBox="0 0 450 570" className="absolute bottom-[90px] left-[108px]" fill="none" fontFamily="Open Sans" fontSize="54">
      <path d="M70 399L99 160" stroke="#1010ff" strokeWidth="6" />
      <path d="M70 399L225 346" stroke="#22d018" strokeWidth="5" />
      <path d="M70 399L265 472" stroke="#ff0808" strokeWidth="5" />
      <path d="M105 100l12 65c-8 4-26 4-35-3Z" fill="url(#coneBlue)" />
      <path d="M265 331l-35 28c-10 0-10-26 0-28Z" fill="#0c4a0c" />
      <ellipse cx="223" cy="346" rx="13" ry="16" fill="#22a01c" />
      <path d="M320 494L272 459c-10 0-17 24-13 31Z" fill="url(#coneRed)" />
      <text x="92" y="90" fill="#1a1aff">Z</text>
      <text x="270" y="350" fill="#22c81a">Y</text>
      <text x="333" y="531" fill="#ff1010">X</text>
    </svg>
  );
}

function Viewer() {
  return (
    <main className="ml-[3px] flex min-w-0 flex-1 flex-col">
      <div className="flex h-[22px] shrink-0 items-stretch border-b border-[#b4bac4]">
        <div className="-mb-px flex w-[150px] items-center border border-b-0 border-[#b4bac4] bg-[#fcfcfc] pl-[37px] text-[11px] text-black">
          Part004.Z3PRT
          <button aria-label="关闭文档" className="ml-3"><Svg s={10}><path d="M1 1l8 8M9 1L1 9" stroke="#7a5c28" strokeWidth="2.500" /></Svg></button>
        </div>
        <button aria-label="新建标签" className="ml-[6px]"><Svg s={10}><path d="M5 0v10M0 5h10" stroke="#999" strokeWidth="2" /></Svg></button>
        <button aria-label="文档列表" className="mr-[6px] ml-auto"><Svg s={10}><path d="M1 2h8M1 5h8L5 9Z" fill="#777" stroke="#777" /></Svg></button>
      </div>
      <div className="relative flex-1 border-x border-b border-[#b8bec8] bg-linear-to-b from-white to-[#9f9f9f]">
        <Datum />
        <Compass />
        <div className="absolute top-2 left-5 text-[11px] leading-[14px] text-[#111]">
          &lt;单击右键&gt;环境相关选项.<br />&lt;Shift +鼠标右键&gt; 显示选择过滤器.
        </div>
        <div className="absolute bottom-[1px] left-[3px] text-[17px] leading-5 text-black">200mm</div>
        <div className="relative flex items-center justify-center pt-[2px]">
          {viewTools.map(([i, a]) => <Tool key={i} i={i} arrow={a} label={i} />)}
          <div className="relative ml-[3px] flex h-[22px] w-[115px] items-center border border-[#b8bec8] bg-white pl-1 text-black">
            <Svg s={14} v={16}><path d="M5 10C0 4 4 0 8 0s8 4 3 10v2H5Z" fill="#fffbd0" stroke="#c8a020" /><path d="M6 14h4" stroke="#666" strokeWidth="3" /></Svg>
            <Svg s={14} v={16} className="ml-[3px]"><rect x="0" y="0" width="16" height="16" fill="#d8eef8" /><circle cx="8" cy="8" r="7" fill="#f5e020" stroke="#666" /></Svg>
            <select aria-label="图层" className="w-0 flex-1 appearance-none bg-transparent pl-[3px] outline-none"><option>图层0000</option></select>
            <Arrow className="pointer-events-none absolute right-[6px]" />
          </div>
        </div>
      </div>
    </main>
  );
}

/* ---------- right panels ---------- */

function ScrollBar({ thumb, label }: { thumb: React.ReactNode; label: string }) {
  return (
    <div aria-label={label} className="flex w-4 shrink-0 flex-col items-center bg-[#dde1ea]">
      <Svg s={9} className="my-[5px]"><path d="M0 6h9L4.500 2Z" fill="#444" /></Svg>
      {thumb}
      <Svg s={9} className="my-[5px]"><path d="M0 3h9L4.500 7Z" fill="#444" /></Svg>
    </div>
  );
}
const Grip = () => <div className="h-[7px] w-2 border-y border-[#888]"><div className="mt-[2px] h-px bg-[#888]" /></div>;

const drives = [["star", "收藏"], ["folder", "系统(C:)"], ["folder", "(D:)"], ["folder", "(E:)"]];
const nav = ["M1 8l7-6v4h8v4H8v4Z", "M16 8L9 2v4H1v4h8v4Z", "M8 0l6 7h-3v9H5V7H2Z"];
const log = ["BUFFER", "BUFFER", "[vxSend,\"Part004.Z3PRT\"]", "ENDBUFFER", "ENDBUFFER", "# 保存文件...", "# 保存成功.", "[vxSend,\"*-83.8391,-33.2139,56.984,LMB_DN\"]", "[vxSend,\"*-85.3187,-33.7543,58.0916,DRAG\"]", "# Starting WINDOW Drag", "BUFFER"];

function Browser() {
  return (
    <aside className="ml-[2px] flex w-[326px] shrink-0 flex-col">
      <PanelHead>文件浏览器</PanelHead>
      <div className="flex min-h-0 flex-1">
        <div className="flex min-w-0 flex-1 flex-col border border-[#b8bec8] px-[1px] pt-[1px]">
          <div className="flex h-[29px] shrink-0 gap-[3px]">
            {nav.map((d) => (
              <button key={d} aria-label="导航" className="flex h-[26px] w-[30px] items-center justify-center border border-[#d0d4d8] bg-[#eeeff0]"><Svg><path d={d} fill="url(#gray)" stroke="#9c9c9c" strokeWidth="0.800" /></Svg></button>
            ))}
            <button aria-label="刷新" className="flex h-[26px] w-[30px] items-center justify-center border border-[#b8bec8] bg-white">
              <Svg s={18}><path d="M2 8c1-4 6-5 10-3M16 10c-1 4-6 5-10 3" stroke="#1595bc" strokeWidth="2.500" /><path d="M10 1l7 4-6 4ZM8 17l-7-4 6-4Z" fill="#1595bc" /></Svg>
            </button>
          </div>
          <ul className={`min-h-0 flex-1 border border-[#b8bec8] text-[#111] ${stripes}`}>
            {drives.map(([i, t]) => (
              <li key={t} className="flex h-[18px] items-center pl-[2px]">
                <Svg s={10}><path d="M3 1l4 4-4 4" stroke="#999" strokeWidth="2" /></Svg>
                <Svg className="mr-[2px] ml-[5px]">{small[i]}</Svg>{t}
              </li>
            ))}
          </ul>
          <div className="mt-2 flex h-[362px] shrink-0 overflow-hidden">
            <div className="flex min-w-0 flex-1 flex-col gap-[2px]">
              <div className="border border-[#b8bec8] bg-[#dfe3ea]">
                <div className="border-b border-[#b8bec8]"><SectionHead>搜索</SectionHead></div>
                <div className="flex gap-[3px] px-[2px] pt-[3px] pb-[2px]">
                  <div className="relative flex h-[26px] flex-1 items-center border border-[#b8bec8] bg-white">
                    <input aria-label="搜索" placeholder="搜索..." className="w-full px-[3px] outline-none placeholder:text-[#777]" />
                    <Arrow className="absolute top-[9px] right-[6px]" />
                  </div>
                  <button aria-label="查找" className="flex h-[26px] w-[38px] items-center justify-center border border-[#b8bec8] bg-white"><Svg><circle cx="7.500" cy="7" r="6" stroke="#b4b4b4" strokeWidth="1.300" /><path d="M12 12l3 3" stroke="#7aa3bc" strokeWidth="2" /></Svg></button>
                  <button aria-label="工具" className="flex h-[26px] w-[38px] items-center justify-center border border-[#b8bec8] bg-white"><Svg><path d="M1 1l7 7" stroke="#aaa" strokeWidth="3" /><path d="M6 8c1 4 3 6 6 7M8 6c4 1 6 3 7 6" stroke="#d01c28" strokeWidth="2.500" /></Svg></button>
                </div>
              </div>
              <div className="flex flex-1 flex-col border border-[#b8bec8] bg-[#dfe3ea]">
                <div className="border-b border-[#b8bec8]"><SectionHead>文件列表</SectionHead></div>
                <div className="flex gap-[3px] border-b border-[#b8bec8] px-[2px] py-[3px]">
                  <button aria-label="视图样式" className="flex h-[26px] w-[42px] items-center border border-[#b8bec8] bg-white">
                    <Svg s={18} className="mx-[7px]"><path d="M0 1h5v4H0Z" fill="#f0a820" /><path d="M9 1h5v4H9ZM0 7h4v4H0ZM9 13h5v4H9Z" fill="#2a8fb5" /><path d="M9 7h5v4H9ZM0 13h4v4H0Z" fill="#d06030" /><path d="M5 3h3M5 9h3M5 15h3M14 3h4M14 9h4M14 15h4" stroke="#999" /></Svg>
                    <Arrow />
                  </button>
                  <Drop value="所有支持文件" label="文件类型" className="h-[26px] flex-1" />
                </div>
                <div className="flex-1 border-b border-[#b8bec8] bg-white" />
                <div className="flex h-[26px] items-center gap-1 pt-[3px]">
                  <span className="pl-[1px] text-black">对象列表</span>
                  <Drop value="" label="对象列表" className="mr-[2px] h-full flex-1 border-b-0" />
                </div>
              </div>
            </div>
            <ScrollBar label="面板滚动" thumb={<><div className="flex h-[302px] w-[15px] items-center justify-center border border-[#8f96a0] bg-[#e9ecf2]"><Grip /></div><div className="flex-1" /></>} />
          </div>
        </div>
        <div className="flex w-[23px] shrink-0 flex-col gap-[1px] overflow-hidden">
          <button aria-label="文件" className="flex h-[45px] items-center border-b border-[#b8bec8] bg-[#fcfcfc] pl-[2px]"><Svg s={24}><rect x="1" y="5" width="24" height="16" fill="url(#gold)" stroke="#d08a10" /><circle cx="6" cy="5" r="4" fill="#fbb930" stroke="#d08a10" /></Svg></button>
          <button aria-label="零件库" className="flex h-[47px] items-center pl-[2px]"><Svg s={24}><rect x="1" y="4" width="24" height="16" fill="url(#gold)" stroke="#d08a10" /><path d="M6 18L20 6" stroke="#285a70" strokeWidth="5" /><circle cx="5" cy="19" r="4" fill="#1c94bc" stroke="#0c5f7c" /><circle cx="20" cy="5" r="4" fill="#1c94bc" stroke="#0c5f7c" /></Svg></button>
          <button aria-label="图层库" className="flex h-[47px] items-center pl-[2px]"><Svg s={24}><path d="M1 10l11-6 12 5-11 7Z" fill="#4fd8bc" stroke="#2a9a8a" /><path d="M1 12l12 6 11-7M1 14l12 6 11-7M1 16l12 6 11-7" stroke="#5a9ab0" /></Svg></button>
        </div>
      </div>
      <div className="mt-[2px]">
        <PanelHead extra={<button aria-label="停止" className="mr-1 h-2 w-2 bg-[#222]" />}>输出</PanelHead>
      </div>
      <div className="mt-[2px] mb-[1px] flex h-[164px] shrink-0 border border-r-0 border-[#b8bec8] bg-white">
        <div className="flex flex-1 flex-col justify-end overflow-hidden pb-[3px] pl-[3px] whitespace-nowrap text-[#111]">
          {log.map((l, n) => <div key={n} className={`shrink-0 ${l.includes("保存") ? "leading-[17px]" : "text-[11px] leading-[15px]"}`}>{l}</div>)}
        </div>
        <div className="w-[11px] overflow-hidden">
          <div className="flex h-full w-4">
            <ScrollBar label="输出滚动" thumb={<><div className="flex-1" /><div className="flex h-7 w-[15px] items-center justify-center border border-[#8f96a0] bg-[#e9ecf2]"><Grip /></div></>} />
          </div>
        </div>
      </div>
    </aside>
  );
}

function StatusBar() {
  const icons = [
    <><rect x="0.500" y="1" width="15" height="14" fill="#fff" stroke="#3a68b8" /><path d="M1 2.500h14" stroke="#5a90e0" strokeWidth="2" /><path d="M3 5v9" stroke="#444" strokeDasharray="1 1" /><path d="M6 7h8" stroke="#444" strokeWidth="2" /><path d="M10 7v7" stroke="#c02828" strokeWidth="2" /></>,
    <><rect x="0.500" y="1.500" width="15" height="10" fill="#22c0e0" stroke="#4a6878" /><path d="M4 13h8v2H4Z" fill="#444" /></>,
    <><rect x="0.500" y="1" width="15" height="14" fill="#fff" stroke="#5a78b8" /><path d="M1 2.500h14" stroke="#5a90e0" strokeWidth="2" /><path d="M3 6h10M3 9h10M3 12h7" stroke="#8a92b0" /></>,
  ];
  return (
    <footer className="flex h-[26px] shrink-0 items-center pl-[5px] text-[#333]">
      选择命令或实体
      <div className="mr-[15px] ml-auto h-full w-px bg-[#888]" />
      <div className="flex gap-2">
        {icons.map((g, n) => (
          <button key={n} aria-label={`状态 ${n + 1}`} className="flex h-5 w-[21px] items-center justify-center border border-[#c8942c] bg-[#ffe47e]"><Svg s={15} v={16}>{g}</Svg></button>
        ))}
      </div>
      <div className="relative ml-2 flex h-[22px] w-[344px] border border-r-0 border-[#b8bec8] bg-white">
        <input aria-label="命令输入" className="w-full bg-transparent px-1 outline-none" />
        <span className="pointer-events-none absolute right-[15px] text-[13px] leading-[18px] text-[#999]">CSDN @林枭_</span>
      </div>
    </footer>
  );
}

export default function App() {
  return (
    <div className="flex h-screen flex-col overflow-hidden bg-[#e2e6e9] font-['Open_Sans','Noto_Sans_CJK_SC',sans-serif] text-[12px] leading-4">
      <Gradients />
      <TitleBar />
      <TabBar />
      <Ribbon />
      <SelectionBar />
      <div className="flex min-h-0 flex-1">
        <Manager />
        <Viewer />
        <Browser />
      </div>
      <StatusBar />
    </div>
  );
}
